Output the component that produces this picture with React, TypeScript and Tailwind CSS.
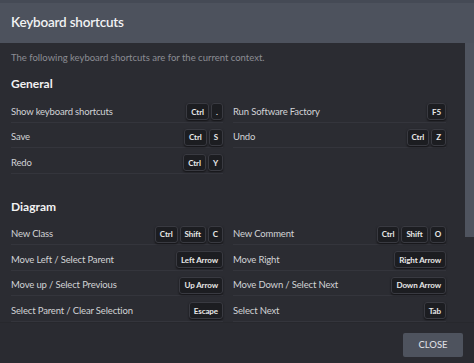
import React from "react";

type Shortcut = { label: string; keys: string[] };

const general: [Shortcut, Shortcut | null][] = [
  [
    { label: "Show keyboard shortcuts", keys: ["Ctrl", "."] },
    { label: "Run Software Factory", keys: ["F5"] },
  ],
  [
    { label: "Save", keys: ["Ctrl", "S"] },
    { label: "Undo", keys: ["Ctrl", "Z"] },
  ],
  [{ label: "Redo", keys: ["Ctrl", "Y"] }, null],
];

const diagram: [Shortcut, Shortcut | null][] = [
  [
    { label: "New Class", keys: ["Ctrl", "Shift", "C"] },
    { label: "New Comment", keys: ["Ctrl", "Shift", "O"] },
  ],
  [
    { label: "Move Left / Select Parent", keys: ["Left Arrow"] },
    { label: "Move Right", keys: ["Right Arrow"] },
  ],
  [
    { label: "Move up / Select Previous", keys: ["Up Arrow"] },
    { label: "Move Down / Select Next", keys: ["Down Arrow"] },
  ],
  [
    { label: "Select Parent / Clear Selection", keys: ["Escape"] },
    { label: "Select Next", keys: ["Tab"] },
  ],
];

function Key({ k }: { k: string }) {
  return (
    <span className="flex h-[17px] min-w-[12px] items-center justify-center rounded-[3px] border border-[#393a41] bg-[#1c1d21] px-[4px] text-[8px] font-bold leading-none tracking-[-0.1px] text-[#e8e8e8] shadow-[0_1px_2px_rgba(0,0,0,0.6)]">
      {k}
    </span>
  );
}

function Row({ s }: { s: Shortcut | null }) {
  return (
    <div className="flex h-[25.5px] items-center justify-between border-b border-[#34353c] pt-[5px]">
      {s && (
        <>
          <span className="text-[9.5px] tracking-[-0.15px] text-[#d2d3d6]">{s.label}</span>
          <span className="flex gap-[2px]">
            {s.keys.map((k) => (
              <Key key={k} k={k} />
            ))}
          </span>
        </>
      )}
    </div>
  );
}

function Section({ title, rows }: { title: string; rows: [Shortcut, Shortcut | null][] }) {
  return (
    <div>
      <div className="flex h-[24px] items-center text-[12px] font-bold text-[#f2f2f2]">{title}</div>
      <div className="mt-[1px] grid grid-cols-[212px_213px] gap-x-[10px]">
        {rows.map(([a, b], i) => (
          <React.Fragment key={i}>
            <Row s={a} />
            {b ? <Row s={b} /> : <div />}
          </React.Fragment>
        ))}
      </div>
    </div>
  );
}

export default function App() {
  return (
    <div
      className="flex h-[363px] w-[474px] flex-col overflow-hidden bg-[#2b2c32]"
      style={{ fontFamily: "Lato, 'Noto Sans', sans-serif" }}
    >
      <div className="flex h-[43px] items-center border-t-[3px] border-[#454a55] bg-[#4d525d] px-[11px] pb-[1px]">
        <span className="text-[13.5px] font-semibold tracking-[-0.2px] text-[#f2f3f4]">Keyboard shortcuts</span>
      </div>
      <div className="flex h-[279px]">
        <div className="flex-1 overflow-hidden pl-[11px]">
          <div className="flex h-[22px] items-end text-[9.5px] text-[#8b8d94]">
            The following keyboard shortcuts are for the current context.
          </div>
          <div className="mt-[7px]">
            <Section title="General" rows={general} />
          </div>
          <div className="mt-[21px]">
            <Section title="Diagram" rows={diagram} />
          </div>
        </div>
        <div className="w-[9px] bg-[#2b2c32]">
          <div className="h-[194px] bg-[#4f545f]" />
        </div>
      </div>
      <div className="flex flex-1 items-start justify-end border-t border-[#27282d] bg-[#2a2b31] pr-[11px] pt-[10px]">
        <button className="flex h-[24px] w-[60px] items-center justify-center rounded-[2px] bg-[#4e535e] text-[9.5px] font-medium text-[#dcdde0]">
          CLOSE
        </button>
      </div>
    </div>
  );
}
